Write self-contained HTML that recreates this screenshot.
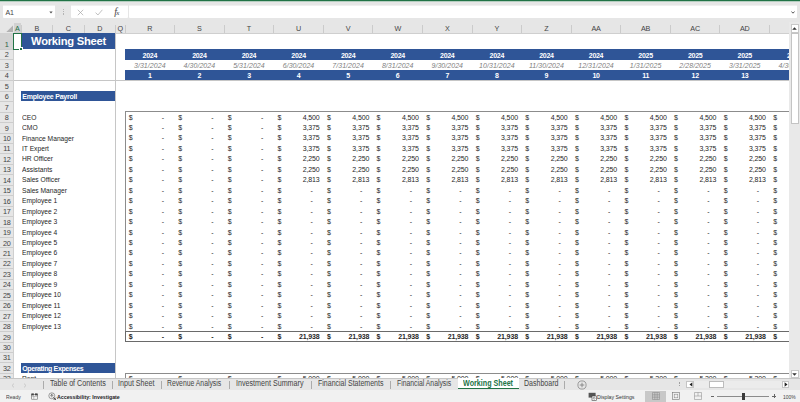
<!DOCTYPE html>
<html><head><meta charset="utf-8"><title>Working Sheet</title>
<style>
*{box-sizing:border-box;margin:0;padding:0}
html,body{width:800px;height:402px;overflow:hidden;background:#e6e6e6}
body{position:relative;font-family:"Liberation Sans",sans-serif;color:#222}
.a{position:absolute;white-space:nowrap}
.t{position:absolute;white-space:nowrap;font-size:7px;line-height:10.45px;color:#262626;letter-spacing:-0.13px}
.lbl{font-size:7.3px;letter-spacing:0;transform:scaleX(0.915);transform-origin:left center}
.b{font-weight:bold}
.w{color:#fff}
.hd{position:absolute;white-space:nowrap;font-size:7.2px;line-height:10px;color:#444;text-align:center;letter-spacing:-0.2px}
.rh{position:absolute;left:0;width:13.5px;text-align:center;font-size:7.3px;line-height:10.45px;color:#444;letter-spacing:-0.3px;white-space:nowrap}
.tab{position:absolute;white-space:nowrap;font-size:8.4px;line-height:10px;color:#444;top:378.1px;transform-origin:left center}
.sep{position:absolute;width:1px;background:#cbcbcb}
.st{position:absolute;white-space:nowrap;font-size:6.1px;line-height:8px;color:#444;transform-origin:left center}
</style></head><body>

<div class="a" style="left:0;top:0;width:800px;height:1px;background:#217346"></div>
<div class="a" style="left:0;top:1px;width:800px;height:1px;background:#b4cdbf"></div>
<div class="a" style="left:3px;top:5px;width:52px;height:13px;background:#fff;border-top:1px solid #f0f0f0;border-radius:1px"></div>
<div class="a" style="left:5.6px;top:8.1px;font-size:7px;line-height:9px;color:#444;letter-spacing:-0.2px">A1</div>
<svg class="a" style="left:49.4px;top:11px" width="4" height="3" viewBox="0 0 4 3"><path d="M0.3 0.4 L3.7 0.4 L2 2.4 Z" fill="#555"/></svg>
<div class="a" style="left:62.7px;top:9.2px;width:1px;height:0.9px;background:#b4b4b4"></div>
<div class="a" style="left:62.7px;top:10.9px;width:1px;height:0.9px;background:#b4b4b4"></div>
<div class="a" style="left:62.7px;top:12.6px;width:1px;height:0.9px;background:#b4b4b4"></div>
<div class="a" style="left:62.7px;top:14.3px;width:1px;height:0.9px;background:#b4b4b4"></div>
<div class="a" style="left:71px;top:5px;width:57px;height:13px;background:#fff;border-top:1px solid #f0f0f0;border-radius:1px"></div>
<svg class="a" style="left:76.5px;top:8.6px" width="7" height="7" viewBox="0 0 7 7"><path d="M0.8 0.8 L6.2 6.2 M6.2 0.8 L0.8 6.2" stroke="#a6a6a6" stroke-width="0.7" fill="none"/></svg>
<svg class="a" style="left:95.4px;top:8.6px" width="8" height="7" viewBox="0 0 8 7"><path d="M0.6 3.6 L2.9 6 L7.4 0.8" stroke="#a6a6a6" stroke-width="0.7" fill="none"/></svg>
<div class="a" style="left:114.2px;top:6.6px;font-family:'Liberation Serif',serif;font-style:italic;font-size:10px;line-height:10px;color:#444;letter-spacing:-0.8px"><span>f</span><span style="font-size:7px">x</span></div>
<div class="a" style="left:129px;top:5px;width:668px;height:13px;background:#fff;border-top:1px solid #f0f0f0;border-radius:1px"></div>
<svg class="a" style="left:790.8px;top:10.8px" width="4" height="3" viewBox="0 0 4 3"><path d="M0.4 0.5 L2 2.2 L3.6 0.5" stroke="#444" stroke-width="0.9" fill="none"/></svg>
<div class="a" style="left:13.6px;top:33.3px;width:775.6px;height:345.2px;background:#fff"></div>
<svg class="a" style="left:5.5px;top:25px" width="7.5" height="7.5" viewBox="0 0 7 7"><path d="M6.8 0.1 L6.8 6.6 L0.3 6.6 Z" fill="#b2b2b2"/></svg>
<div class="a" style="left:13.6px;top:23.4px;width:7.6px;height:9.9px;background:#d2d2d2"></div>
<div class="hd" style="left:13.60px;width:7.60px;top:23.6px;color:#217346">A</div>
<div class="hd" style="left:21.20px;width:31.10px;top:23.6px;color:#444">B</div>
<div class="hd" style="left:52.30px;width:31.70px;top:23.6px;color:#444">C</div>
<div class="hd" style="left:84.00px;width:31.60px;top:23.6px;color:#444">D</div>
<div class="hd" style="left:115.60px;width:9.40px;top:23.6px;color:#444">Q</div>
<div class="hd" style="left:125.00px;width:49.58px;top:23.6px;color:#444">R</div>
<div class="hd" style="left:174.58px;width:49.58px;top:23.6px;color:#444">S</div>
<div class="hd" style="left:224.16px;width:49.58px;top:23.6px;color:#444">T</div>
<div class="hd" style="left:273.74px;width:49.58px;top:23.6px;color:#444">U</div>
<div class="hd" style="left:323.32px;width:49.58px;top:23.6px;color:#444">V</div>
<div class="hd" style="left:372.90px;width:49.58px;top:23.6px;color:#444">W</div>
<div class="hd" style="left:422.48px;width:49.58px;top:23.6px;color:#444">X</div>
<div class="hd" style="left:472.06px;width:49.58px;top:23.6px;color:#444">Y</div>
<div class="hd" style="left:521.64px;width:49.58px;top:23.6px;color:#444">Z</div>
<div class="hd" style="left:571.22px;width:49.58px;top:23.6px;color:#444">AA</div>
<div class="hd" style="left:620.80px;width:49.58px;top:23.6px;color:#444">AB</div>
<div class="hd" style="left:670.38px;width:49.58px;top:23.6px;color:#444">AC</div>
<div class="hd" style="left:719.96px;width:49.58px;top:23.6px;color:#444">AD</div>
<div class="sep" style="left:20.70px;top:24.5px;height:8.8px"></div>
<div class="sep" style="left:51.80px;top:24.5px;height:8.8px"></div>
<div class="sep" style="left:83.50px;top:24.5px;height:8.8px"></div>
<div class="sep" style="left:115.10px;top:24.5px;height:8.8px"></div>
<div class="sep" style="left:124.50px;top:24.5px;height:8.8px"></div>
<div class="sep" style="left:174.08px;top:24.5px;height:8.8px"></div>
<div class="sep" style="left:223.66px;top:24.5px;height:8.8px"></div>
<div class="sep" style="left:273.24px;top:24.5px;height:8.8px"></div>
<div class="sep" style="left:322.82px;top:24.5px;height:8.8px"></div>
<div class="sep" style="left:372.40px;top:24.5px;height:8.8px"></div>
<div class="sep" style="left:421.98px;top:24.5px;height:8.8px"></div>
<div class="sep" style="left:471.56px;top:24.5px;height:8.8px"></div>
<div class="sep" style="left:521.14px;top:24.5px;height:8.8px"></div>
<div class="sep" style="left:570.72px;top:24.5px;height:8.8px"></div>
<div class="sep" style="left:620.30px;top:24.5px;height:8.8px"></div>
<div class="sep" style="left:669.88px;top:24.5px;height:8.8px"></div>
<div class="sep" style="left:719.46px;top:24.5px;height:8.8px"></div>
<div class="sep" style="left:769.04px;top:24.5px;height:8.8px"></div>
<div class="a" style="left:0;top:32.9px;width:789.2px;height:0.6px;background:#cfcfcf"></div>
<div class="a" style="left:0;top:33.3px;width:13.3px;height:16.1px;background:#d2d2d2"></div>
<div class="rh" style="top:39.55px;color:#2f6148">1</div>
<div class="a" style="left:0;top:48.90px;width:13.6px;height:1px;background:#cdcdcd"></div>
<div class="rh" style="top:50.40px">2</div>
<div class="a" style="left:0;top:59.35px;width:13.6px;height:1px;background:#cdcdcd"></div>
<div class="rh" style="top:60.85px">3</div>
<div class="a" style="left:0;top:69.80px;width:13.6px;height:1px;background:#cdcdcd"></div>
<div class="rh" style="top:71.30px">4</div>
<div class="a" style="left:0;top:80.25px;width:13.6px;height:1px;background:#cdcdcd"></div>
<div class="rh" style="top:81.75px">5</div>
<div class="a" style="left:0;top:90.70px;width:13.6px;height:1px;background:#cdcdcd"></div>
<div class="rh" style="top:92.20px">6</div>
<div class="a" style="left:0;top:101.15px;width:13.6px;height:1px;background:#cdcdcd"></div>
<div class="rh" style="top:102.65px">7</div>
<div class="a" style="left:0;top:111.60px;width:13.6px;height:1px;background:#cdcdcd"></div>
<div class="rh" style="top:113.10px">8</div>
<div class="a" style="left:0;top:122.05px;width:13.6px;height:1px;background:#cdcdcd"></div>
<div class="rh" style="top:123.55px">9</div>
<div class="a" style="left:0;top:132.50px;width:13.6px;height:1px;background:#cdcdcd"></div>
<div class="rh" style="top:134.00px">10</div>
<div class="a" style="left:0;top:142.95px;width:13.6px;height:1px;background:#cdcdcd"></div>
<div class="rh" style="top:144.45px">11</div>
<div class="a" style="left:0;top:153.40px;width:13.6px;height:1px;background:#cdcdcd"></div>
<div class="rh" style="top:154.90px">12</div>
<div class="a" style="left:0;top:163.85px;width:13.6px;height:1px;background:#cdcdcd"></div>
<div class="rh" style="top:165.35px">13</div>
<div class="a" style="left:0;top:174.30px;width:13.6px;height:1px;background:#cdcdcd"></div>
<div class="rh" style="top:175.80px">14</div>
<div class="a" style="left:0;top:184.75px;width:13.6px;height:1px;background:#cdcdcd"></div>
<div class="rh" style="top:186.25px">15</div>
<div class="a" style="left:0;top:195.20px;width:13.6px;height:1px;background:#cdcdcd"></div>
<div class="rh" style="top:196.70px">16</div>
<div class="a" style="left:0;top:205.65px;width:13.6px;height:1px;background:#cdcdcd"></div>
<div class="rh" style="top:207.15px">17</div>
<div class="a" style="left:0;top:216.10px;width:13.6px;height:1px;background:#cdcdcd"></div>
<div class="rh" style="top:217.60px">18</div>
<div class="a" style="left:0;top:226.55px;width:13.6px;height:1px;background:#cdcdcd"></div>
<div class="rh" style="top:228.05px">19</div>
<div class="a" style="left:0;top:237.00px;width:13.6px;height:1px;background:#cdcdcd"></div>
<div class="rh" style="top:238.50px">20</div>
<div class="a" style="left:0;top:247.45px;width:13.6px;height:1px;background:#cdcdcd"></div>
<div class="rh" style="top:248.95px">21</div>
<div class="a" style="left:0;top:257.90px;width:13.6px;height:1px;background:#cdcdcd"></div>
<div class="rh" style="top:259.40px">22</div>
<div class="a" style="left:0;top:268.35px;width:13.6px;height:1px;background:#cdcdcd"></div>
<div class="rh" style="top:269.85px">23</div>
<div class="a" style="left:0;top:278.80px;width:13.6px;height:1px;background:#cdcdcd"></div>
<div class="rh" style="top:280.30px">24</div>
<div class="a" style="left:0;top:289.25px;width:13.6px;height:1px;background:#cdcdcd"></div>
<div class="rh" style="top:290.75px">25</div>
<div class="a" style="left:0;top:299.70px;width:13.6px;height:1px;background:#cdcdcd"></div>
<div class="rh" style="top:301.20px">26</div>
<div class="a" style="left:0;top:310.15px;width:13.6px;height:1px;background:#cdcdcd"></div>
<div class="rh" style="top:311.65px">27</div>
<div class="a" style="left:0;top:320.60px;width:13.6px;height:1px;background:#cdcdcd"></div>
<div class="rh" style="top:322.10px">28</div>
<div class="a" style="left:0;top:331.05px;width:13.6px;height:1px;background:#cdcdcd"></div>
<div class="rh" style="top:332.55px">29</div>
<div class="a" style="left:0;top:341.50px;width:13.6px;height:1px;background:#cdcdcd"></div>
<div class="rh" style="top:343.00px">30</div>
<div class="a" style="left:0;top:351.95px;width:13.6px;height:1px;background:#cdcdcd"></div>
<div class="rh" style="top:353.45px">31</div>
<div class="a" style="left:0;top:362.40px;width:13.6px;height:1px;background:#cdcdcd"></div>
<div class="rh" style="top:363.90px">32</div>
<div class="a" style="left:0;top:372.85px;width:13.6px;height:1px;background:#cdcdcd"></div>
<div class="rh" style="top:374.35px">33</div>
<div class="a" style="left:13.1px;top:33.3px;width:0.7px;height:345px;background:#cfcfcf"></div>
<div class="a" style="left:21.4px;top:33.4px;width:94.2px;height:15.4px;background:#2f5597"></div>
<div class="a b w" style="left:21.4px;width:94.2px;text-align:center;top:34.1px;font-size:11.2px;line-height:15px;letter-spacing:-0.25px">Working Sheet</div>
<div class="a" style="left:125px;top:49.40px;width:664.2px;height:10.45px;background:#2f5597"></div>
<div class="a" style="left:125px;top:70.30px;width:664.2px;height:10.45px;background:#2f5597"></div>
<div class="a" style="left:20.6px;top:90.90px;width:95px;height:10.25px;background:#2f5597"></div>
<div class="t b w" style="left:22.2px;top:92.20px;letter-spacing:-0.22px">Employee Payroll</div>
<div class="a" style="left:20.6px;top:362.60px;width:95px;height:10.25px;background:#2f5597"></div>
<div class="t b w" style="left:22.2px;top:363.90px;letter-spacing:-0.36px">Operating Expenses</div>
<div class="a" style="left:115px;top:33.3px;width:1px;height:345px;background:#c6c6c6"></div>
<div class="a" style="left:13.6px;top:80px;width:775.6px;height:1px;background:#c6c6c6"></div>
<div class="a" style="left:125px;top:33.3px;width:664.2px;height:345.2px;overflow:hidden">
<div class="t b w" style="left:0.00px;width:49.58px;text-align:center;top:17.30px;letter-spacing:-0.28px">2024</div>
<div class="t" style="left:0.00px;width:49.58px;text-align:center;top:27.85px;font-style:italic;color:#808080;letter-spacing:0.05px">3/31/2024</div>
<div class="t b w" style="left:0.00px;width:49.58px;text-align:center;top:38.20px;letter-spacing:-0.28px">1</div>
<div class="t b w" style="left:49.58px;width:49.58px;text-align:center;top:17.30px;letter-spacing:-0.28px">2024</div>
<div class="t" style="left:49.58px;width:49.58px;text-align:center;top:27.85px;font-style:italic;color:#808080;letter-spacing:0.05px">4/30/2024</div>
<div class="t b w" style="left:49.58px;width:49.58px;text-align:center;top:38.20px;letter-spacing:-0.28px">2</div>
<div class="t b w" style="left:99.16px;width:49.58px;text-align:center;top:17.30px;letter-spacing:-0.28px">2024</div>
<div class="t" style="left:99.16px;width:49.58px;text-align:center;top:27.85px;font-style:italic;color:#808080;letter-spacing:0.05px">5/31/2024</div>
<div class="t b w" style="left:99.16px;width:49.58px;text-align:center;top:38.20px;letter-spacing:-0.28px">3</div>
<div class="t b w" style="left:148.74px;width:49.58px;text-align:center;top:17.30px;letter-spacing:-0.28px">2024</div>
<div class="t" style="left:148.74px;width:49.58px;text-align:center;top:27.85px;font-style:italic;color:#808080;letter-spacing:0.05px">6/30/2024</div>
<div class="t b w" style="left:148.74px;width:49.58px;text-align:center;top:38.20px;letter-spacing:-0.28px">4</div>
<div class="t b w" style="left:198.32px;width:49.58px;text-align:center;top:17.30px;letter-spacing:-0.28px">2024</div>
<div class="t" style="left:198.32px;width:49.58px;text-align:center;top:27.85px;font-style:italic;color:#808080;letter-spacing:0.05px">7/31/2024</div>
<div class="t b w" style="left:198.32px;width:49.58px;text-align:center;top:38.20px;letter-spacing:-0.28px">5</div>
<div class="t b w" style="left:247.90px;width:49.58px;text-align:center;top:17.30px;letter-spacing:-0.28px">2024</div>
<div class="t" style="left:247.90px;width:49.58px;text-align:center;top:27.85px;font-style:italic;color:#808080;letter-spacing:0.05px">8/31/2024</div>
<div class="t b w" style="left:247.90px;width:49.58px;text-align:center;top:38.20px;letter-spacing:-0.28px">6</div>
<div class="t b w" style="left:297.48px;width:49.58px;text-align:center;top:17.30px;letter-spacing:-0.28px">2024</div>
<div class="t" style="left:297.48px;width:49.58px;text-align:center;top:27.85px;font-style:italic;color:#808080;letter-spacing:0.05px">9/30/2024</div>
<div class="t b w" style="left:297.48px;width:49.58px;text-align:center;top:38.20px;letter-spacing:-0.28px">7</div>
<div class="t b w" style="left:347.06px;width:49.58px;text-align:center;top:17.30px;letter-spacing:-0.28px">2024</div>
<div class="t" style="left:347.06px;width:49.58px;text-align:center;top:27.85px;font-style:italic;color:#808080;letter-spacing:0.05px">10/31/2024</div>
<div class="t b w" style="left:347.06px;width:49.58px;text-align:center;top:38.20px;letter-spacing:-0.28px">8</div>
<div class="t b w" style="left:396.64px;width:49.58px;text-align:center;top:17.30px;letter-spacing:-0.28px">2024</div>
<div class="t" style="left:396.64px;width:49.58px;text-align:center;top:27.85px;font-style:italic;color:#808080;letter-spacing:0.05px">11/30/2024</div>
<div class="t b w" style="left:396.64px;width:49.58px;text-align:center;top:38.20px;letter-spacing:-0.28px">9</div>
<div class="t b w" style="left:446.22px;width:49.58px;text-align:center;top:17.30px;letter-spacing:-0.28px">2024</div>
<div class="t" style="left:446.22px;width:49.58px;text-align:center;top:27.85px;font-style:italic;color:#808080;letter-spacing:0.05px">12/31/2024</div>
<div class="t b w" style="left:446.22px;width:49.58px;text-align:center;top:38.20px;letter-spacing:-0.28px">10</div>
<div class="t b w" style="left:495.80px;width:49.58px;text-align:center;top:17.30px;letter-spacing:-0.28px">2025</div>
<div class="t" style="left:495.80px;width:49.58px;text-align:center;top:27.85px;font-style:italic;color:#808080;letter-spacing:0.05px">1/31/2025</div>
<div class="t b w" style="left:495.80px;width:49.58px;text-align:center;top:38.20px;letter-spacing:-0.28px">11</div>
<div class="t b w" style="left:545.38px;width:49.58px;text-align:center;top:17.30px;letter-spacing:-0.28px">2025</div>
<div class="t" style="left:545.38px;width:49.58px;text-align:center;top:27.85px;font-style:italic;color:#808080;letter-spacing:0.05px">2/28/2025</div>
<div class="t b w" style="left:545.38px;width:49.58px;text-align:center;top:38.20px;letter-spacing:-0.28px">12</div>
<div class="t b w" style="left:594.96px;width:49.58px;text-align:center;top:17.30px;letter-spacing:-0.28px">2025</div>
<div class="t" style="left:594.96px;width:49.58px;text-align:center;top:27.85px;font-style:italic;color:#808080;letter-spacing:0.05px">3/31/2025</div>
<div class="t b w" style="left:594.96px;width:49.58px;text-align:center;top:38.20px;letter-spacing:-0.28px">13</div>
<div class="t b w" style="left:644.54px;width:49.58px;text-align:center;top:17.30px;letter-spacing:-0.28px">2025</div>
<div class="t" style="left:644.54px;width:49.58px;text-align:center;top:27.85px;font-style:italic;color:#808080;letter-spacing:0.05px">4/30/2025</div>
<div class="t b w" style="left:644.54px;width:49.58px;text-align:center;top:38.20px;letter-spacing:-0.28px">14</div>
<div class="a" style="left:0;top:78.20px;width:700px;height:219.45px;border-left:1.3px solid #8c8c8c;border-top:1.3px solid #8c8c8c"></div>
<div class="a" style="left:0;top:297.75px;width:700px;height:10.95px;border-left:1px solid #6a6a6a;border-top:1px solid #6a6a6a;border-bottom:1px solid #6a6a6a"></div>
<div class="a" style="left:0;top:339.55px;width:700px;height:10.95px;border-left:1.3px solid #8c8c8c;border-top:1.3px solid #8c8c8c"></div>
<div class="t" style="left:3.70px;top:79.30px">$</div>
<div class="t" style="left:0.00px;width:38.98px;text-align:right;top:79.30px">-</div>
<div class="t" style="left:53.28px;top:79.30px">$</div>
<div class="t" style="left:49.58px;width:38.98px;text-align:right;top:79.30px">-</div>
<div class="t" style="left:102.86px;top:79.30px">$</div>
<div class="t" style="left:99.16px;width:38.98px;text-align:right;top:79.30px">-</div>
<div class="t" style="left:152.44px;top:79.30px">$</div>
<div class="t" style="left:148.74px;width:45.88px;text-align:right;top:79.30px">4,500</div>
<div class="t" style="left:202.02px;top:79.30px">$</div>
<div class="t" style="left:198.32px;width:45.88px;text-align:right;top:79.30px">4,500</div>
<div class="t" style="left:251.60px;top:79.30px">$</div>
<div class="t" style="left:247.90px;width:45.88px;text-align:right;top:79.30px">4,500</div>
<div class="t" style="left:301.18px;top:79.30px">$</div>
<div class="t" style="left:297.48px;width:45.88px;text-align:right;top:79.30px">4,500</div>
<div class="t" style="left:350.76px;top:79.30px">$</div>
<div class="t" style="left:347.06px;width:45.88px;text-align:right;top:79.30px">4,500</div>
<div class="t" style="left:400.34px;top:79.30px">$</div>
<div class="t" style="left:396.64px;width:45.88px;text-align:right;top:79.30px">4,500</div>
<div class="t" style="left:449.92px;top:79.30px">$</div>
<div class="t" style="left:446.22px;width:45.88px;text-align:right;top:79.30px">4,500</div>
<div class="t" style="left:499.50px;top:79.30px">$</div>
<div class="t" style="left:495.80px;width:45.88px;text-align:right;top:79.30px">4,500</div>
<div class="t" style="left:549.08px;top:79.30px">$</div>
<div class="t" style="left:545.38px;width:45.88px;text-align:right;top:79.30px">4,500</div>
<div class="t" style="left:598.66px;top:79.30px">$</div>
<div class="t" style="left:594.96px;width:45.88px;text-align:right;top:79.30px">4,500</div>
<div class="t" style="left:648.24px;top:79.30px">$</div>
<div class="t" style="left:644.54px;width:45.88px;text-align:right;top:79.30px">4,500</div>
<div class="t" style="left:3.70px;top:89.75px">$</div>
<div class="t" style="left:0.00px;width:38.98px;text-align:right;top:89.75px">-</div>
<div class="t" style="left:53.28px;top:89.75px">$</div>
<div class="t" style="left:49.58px;width:38.98px;text-align:right;top:89.75px">-</div>
<div class="t" style="left:102.86px;top:89.75px">$</div>
<div class="t" style="left:99.16px;width:38.98px;text-align:right;top:89.75px">-</div>
<div class="t" style="left:152.44px;top:89.75px">$</div>
<div class="t" style="left:148.74px;width:45.88px;text-align:right;top:89.75px">3,375</div>
<div class="t" style="left:202.02px;top:89.75px">$</div>
<div class="t" style="left:198.32px;width:45.88px;text-align:right;top:89.75px">3,375</div>
<div class="t" style="left:251.60px;top:89.75px">$</div>
<div class="t" style="left:247.90px;width:45.88px;text-align:right;top:89.75px">3,375</div>
<div class="t" style="left:301.18px;top:89.75px">$</div>
<div class="t" style="left:297.48px;width:45.88px;text-align:right;top:89.75px">3,375</div>
<div class="t" style="left:350.76px;top:89.75px">$</div>
<div class="t" style="left:347.06px;width:45.88px;text-align:right;top:89.75px">3,375</div>
<div class="t" style="left:400.34px;top:89.75px">$</div>
<div class="t" style="left:396.64px;width:45.88px;text-align:right;top:89.75px">3,375</div>
<div class="t" style="left:449.92px;top:89.75px">$</div>
<div class="t" style="left:446.22px;width:45.88px;text-align:right;top:89.75px">3,375</div>
<div class="t" style="left:499.50px;top:89.75px">$</div>
<div class="t" style="left:495.80px;width:45.88px;text-align:right;top:89.75px">3,375</div>
<div class="t" style="left:549.08px;top:89.75px">$</div>
<div class="t" style="left:545.38px;width:45.88px;text-align:right;top:89.75px">3,375</div>
<div class="t" style="left:598.66px;top:89.75px">$</div>
<div class="t" style="left:594.96px;width:45.88px;text-align:right;top:89.75px">3,375</div>
<div class="t" style="left:648.24px;top:89.75px">$</div>
<div class="t" style="left:644.54px;width:45.88px;text-align:right;top:89.75px">3,375</div>
<div class="t" style="left:3.70px;top:100.20px">$</div>
<div class="t" style="left:0.00px;width:38.98px;text-align:right;top:100.20px">-</div>
<div class="t" style="left:53.28px;top:100.20px">$</div>
<div class="t" style="left:49.58px;width:38.98px;text-align:right;top:100.20px">-</div>
<div class="t" style="left:102.86px;top:100.20px">$</div>
<div class="t" style="left:99.16px;width:38.98px;text-align:right;top:100.20px">-</div>
<div class="t" style="left:152.44px;top:100.20px">$</div>
<div class="t" style="left:148.74px;width:45.88px;text-align:right;top:100.20px">3,375</div>
<div class="t" style="left:202.02px;top:100.20px">$</div>
<div class="t" style="left:198.32px;width:45.88px;text-align:right;top:100.20px">3,375</div>
<div class="t" style="left:251.60px;top:100.20px">$</div>
<div class="t" style="left:247.90px;width:45.88px;text-align:right;top:100.20px">3,375</div>
<div class="t" style="left:301.18px;top:100.20px">$</div>
<div class="t" style="left:297.48px;width:45.88px;text-align:right;top:100.20px">3,375</div>
<div class="t" style="left:350.76px;top:100.20px">$</div>
<div class="t" style="left:347.06px;width:45.88px;text-align:right;top:100.20px">3,375</div>
<div class="t" style="left:400.34px;top:100.20px">$</div>
<div class="t" style="left:396.64px;width:45.88px;text-align:right;top:100.20px">3,375</div>
<div class="t" style="left:449.92px;top:100.20px">$</div>
<div class="t" style="left:446.22px;width:45.88px;text-align:right;top:100.20px">3,375</div>
<div class="t" style="left:499.50px;top:100.20px">$</div>
<div class="t" style="left:495.80px;width:45.88px;text-align:right;top:100.20px">3,375</div>
<div class="t" style="left:549.08px;top:100.20px">$</div>
<div class="t" style="left:545.38px;width:45.88px;text-align:right;top:100.20px">3,375</div>
<div class="t" style="left:598.66px;top:100.20px">$</div>
<div class="t" style="left:594.96px;width:45.88px;text-align:right;top:100.20px">3,375</div>
<div class="t" style="left:648.24px;top:100.20px">$</div>
<div class="t" style="left:644.54px;width:45.88px;text-align:right;top:100.20px">3,375</div>
<div class="t" style="left:3.70px;top:110.65px">$</div>
<div class="t" style="left:0.00px;width:38.98px;text-align:right;top:110.65px">-</div>
<div class="t" style="left:53.28px;top:110.65px">$</div>
<div class="t" style="left:49.58px;width:38.98px;text-align:right;top:110.65px">-</div>
<div class="t" style="left:102.86px;top:110.65px">$</div>
<div class="t" style="left:99.16px;width:38.98px;text-align:right;top:110.65px">-</div>
<div class="t" style="left:152.44px;top:110.65px">$</div>
<div class="t" style="left:148.74px;width:45.88px;text-align:right;top:110.65px">3,375</div>
<div class="t" style="left:202.02px;top:110.65px">$</div>
<div class="t" style="left:198.32px;width:45.88px;text-align:right;top:110.65px">3,375</div>
<div class="t" style="left:251.60px;top:110.65px">$</div>
<div class="t" style="left:247.90px;width:45.88px;text-align:right;top:110.65px">3,375</div>
<div class="t" style="left:301.18px;top:110.65px">$</div>
<div class="t" style="left:297.48px;width:45.88px;text-align:right;top:110.65px">3,375</div>
<div class="t" style="left:350.76px;top:110.65px">$</div>
<div class="t" style="left:347.06px;width:45.88px;text-align:right;top:110.65px">3,375</div>
<div class="t" style="left:400.34px;top:110.65px">$</div>
<div class="t" style="left:396.64px;width:45.88px;text-align:right;top:110.65px">3,375</div>
<div class="t" style="left:449.92px;top:110.65px">$</div>
<div class="t" style="left:446.22px;width:45.88px;text-align:right;top:110.65px">3,375</div>
<div class="t" style="left:499.50px;top:110.65px">$</div>
<div class="t" style="left:495.80px;width:45.88px;text-align:right;top:110.65px">3,375</div>
<div class="t" style="left:549.08px;top:110.65px">$</div>
<div class="t" style="left:545.38px;width:45.88px;text-align:right;top:110.65px">3,375</div>
<div class="t" style="left:598.66px;top:110.65px">$</div>
<div class="t" style="left:594.96px;width:45.88px;text-align:right;top:110.65px">3,375</div>
<div class="t" style="left:648.24px;top:110.65px">$</div>
<div class="t" style="left:644.54px;width:45.88px;text-align:right;top:110.65px">3,375</div>
<div class="t" style="left:3.70px;top:121.10px">$</div>
<div class="t" style="left:0.00px;width:38.98px;text-align:right;top:121.10px">-</div>
<div class="t" style="left:53.28px;top:121.10px">$</div>
<div class="t" style="left:49.58px;width:38.98px;text-align:right;top:121.10px">-</div>
<div class="t" style="left:102.86px;top:121.10px">$</div>
<div class="t" style="left:99.16px;width:38.98px;text-align:right;top:121.10px">-</div>
<div class="t" style="left:152.44px;top:121.10px">$</div>
<div class="t" style="left:148.74px;width:45.88px;text-align:right;top:121.10px">2,250</div>
<div class="t" style="left:202.02px;top:121.10px">$</div>
<div class="t" style="left:198.32px;width:45.88px;text-align:right;top:121.10px">2,250</div>
<div class="t" style="left:251.60px;top:121.10px">$</div>
<div class="t" style="left:247.90px;width:45.88px;text-align:right;top:121.10px">2,250</div>
<div class="t" style="left:301.18px;top:121.10px">$</div>
<div class="t" style="left:297.48px;width:45.88px;text-align:right;top:121.10px">2,250</div>
<div class="t" style="left:350.76px;top:121.10px">$</div>
<div class="t" style="left:347.06px;width:45.88px;text-align:right;top:121.10px">2,250</div>
<div class="t" style="left:400.34px;top:121.10px">$</div>
<div class="t" style="left:396.64px;width:45.88px;text-align:right;top:121.10px">2,250</div>
<div class="t" style="left:449.92px;top:121.10px">$</div>
<div class="t" style="left:446.22px;width:45.88px;text-align:right;top:121.10px">2,250</div>
<div class="t" style="left:499.50px;top:121.10px">$</div>
<div class="t" style="left:495.80px;width:45.88px;text-align:right;top:121.10px">2,250</div>
<div class="t" style="left:549.08px;top:121.10px">$</div>
<div class="t" style="left:545.38px;width:45.88px;text-align:right;top:121.10px">2,250</div>
<div class="t" style="left:598.66px;top:121.10px">$</div>
<div class="t" style="left:594.96px;width:45.88px;text-align:right;top:121.10px">2,250</div>
<div class="t" style="left:648.24px;top:121.10px">$</div>
<div class="t" style="left:644.54px;width:45.88px;text-align:right;top:121.10px">2,250</div>
<div class="t" style="left:3.70px;top:131.55px">$</div>
<div class="t" style="left:0.00px;width:38.98px;text-align:right;top:131.55px">-</div>
<div class="t" style="left:53.28px;top:131.55px">$</div>
<div class="t" style="left:49.58px;width:38.98px;text-align:right;top:131.55px">-</div>
<div class="t" style="left:102.86px;top:131.55px">$</div>
<div class="t" style="left:99.16px;width:38.98px;text-align:right;top:131.55px">-</div>
<div class="t" style="left:152.44px;top:131.55px">$</div>
<div class="t" style="left:148.74px;width:45.88px;text-align:right;top:131.55px">2,250</div>
<div class="t" style="left:202.02px;top:131.55px">$</div>
<div class="t" style="left:198.32px;width:45.88px;text-align:right;top:131.55px">2,250</div>
<div class="t" style="left:251.60px;top:131.55px">$</div>
<div class="t" style="left:247.90px;width:45.88px;text-align:right;top:131.55px">2,250</div>
<div class="t" style="left:301.18px;top:131.55px">$</div>
<div class="t" style="left:297.48px;width:45.88px;text-align:right;top:131.55px">2,250</div>
<div class="t" style="left:350.76px;top:131.55px">$</div>
<div class="t" style="left:347.06px;width:45.88px;text-align:right;top:131.55px">2,250</div>
<div class="t" style="left:400.34px;top:131.55px">$</div>
<div class="t" style="left:396.64px;width:45.88px;text-align:right;top:131.55px">2,250</div>
<div class="t" style="left:449.92px;top:131.55px">$</div>
<div class="t" style="left:446.22px;width:45.88px;text-align:right;top:131.55px">2,250</div>
<div class="t" style="left:499.50px;top:131.55px">$</div>
<div class="t" style="left:495.80px;width:45.88px;text-align:right;top:131.55px">2,250</div>
<div class="t" style="left:549.08px;top:131.55px">$</div>
<div class="t" style="left:545.38px;width:45.88px;text-align:right;top:131.55px">2,250</div>
<div class="t" style="left:598.66px;top:131.55px">$</div>
<div class="t" style="left:594.96px;width:45.88px;text-align:right;top:131.55px">2,250</div>
<div class="t" style="left:648.24px;top:131.55px">$</div>
<div class="t" style="left:644.54px;width:45.88px;text-align:right;top:131.55px">2,250</div>
<div class="t" style="left:3.70px;top:142.00px">$</div>
<div class="t" style="left:0.00px;width:38.98px;text-align:right;top:142.00px">-</div>
<div class="t" style="left:53.28px;top:142.00px">$</div>
<div class="t" style="left:49.58px;width:38.98px;text-align:right;top:142.00px">-</div>
<div class="t" style="left:102.86px;top:142.00px">$</div>
<div class="t" style="left:99.16px;width:38.98px;text-align:right;top:142.00px">-</div>
<div class="t" style="left:152.44px;top:142.00px">$</div>
<div class="t" style="left:148.74px;width:45.88px;text-align:right;top:142.00px">2,813</div>
<div class="t" style="left:202.02px;top:142.00px">$</div>
<div class="t" style="left:198.32px;width:45.88px;text-align:right;top:142.00px">2,813</div>
<div class="t" style="left:251.60px;top:142.00px">$</div>
<div class="t" style="left:247.90px;width:45.88px;text-align:right;top:142.00px">2,813</div>
<div class="t" style="left:301.18px;top:142.00px">$</div>
<div class="t" style="left:297.48px;width:45.88px;text-align:right;top:142.00px">2,813</div>
<div class="t" style="left:350.76px;top:142.00px">$</div>
<div class="t" style="left:347.06px;width:45.88px;text-align:right;top:142.00px">2,813</div>
<div class="t" style="left:400.34px;top:142.00px">$</div>
<div class="t" style="left:396.64px;width:45.88px;text-align:right;top:142.00px">2,813</div>
<div class="t" style="left:449.92px;top:142.00px">$</div>
<div class="t" style="left:446.22px;width:45.88px;text-align:right;top:142.00px">2,813</div>
<div class="t" style="left:499.50px;top:142.00px">$</div>
<div class="t" style="left:495.80px;width:45.88px;text-align:right;top:142.00px">2,813</div>
<div class="t" style="left:549.08px;top:142.00px">$</div>
<div class="t" style="left:545.38px;width:45.88px;text-align:right;top:142.00px">2,813</div>
<div class="t" style="left:598.66px;top:142.00px">$</div>
<div class="t" style="left:594.96px;width:45.88px;text-align:right;top:142.00px">2,813</div>
<div class="t" style="left:648.24px;top:142.00px">$</div>
<div class="t" style="left:644.54px;width:45.88px;text-align:right;top:142.00px">2,813</div>
<div class="t" style="left:3.70px;top:152.45px">$</div>
<div class="t" style="left:0.00px;width:38.98px;text-align:right;top:152.45px">-</div>
<div class="t" style="left:53.28px;top:152.45px">$</div>
<div class="t" style="left:49.58px;width:38.98px;text-align:right;top:152.45px">-</div>
<div class="t" style="left:102.86px;top:152.45px">$</div>
<div class="t" style="left:99.16px;width:38.98px;text-align:right;top:152.45px">-</div>
<div class="t" style="left:152.44px;top:152.45px">$</div>
<div class="t" style="left:148.74px;width:38.98px;text-align:right;top:152.45px">-</div>
<div class="t" style="left:202.02px;top:152.45px">$</div>
<div class="t" style="left:198.32px;width:38.98px;text-align:right;top:152.45px">-</div>
<div class="t" style="left:251.60px;top:152.45px">$</div>
<div class="t" style="left:247.90px;width:38.98px;text-align:right;top:152.45px">-</div>
<div class="t" style="left:301.18px;top:152.45px">$</div>
<div class="t" style="left:297.48px;width:38.98px;text-align:right;top:152.45px">-</div>
<div class="t" style="left:350.76px;top:152.45px">$</div>
<div class="t" style="left:347.06px;width:38.98px;text-align:right;top:152.45px">-</div>
<div class="t" style="left:400.34px;top:152.45px">$</div>
<div class="t" style="left:396.64px;width:38.98px;text-align:right;top:152.45px">-</div>
<div class="t" style="left:449.92px;top:152.45px">$</div>
<div class="t" style="left:446.22px;width:38.98px;text-align:right;top:152.45px">-</div>
<div class="t" style="left:499.50px;top:152.45px">$</div>
<div class="t" style="left:495.80px;width:38.98px;text-align:right;top:152.45px">-</div>
<div class="t" style="left:549.08px;top:152.45px">$</div>
<div class="t" style="left:545.38px;width:38.98px;text-align:right;top:152.45px">-</div>
<div class="t" style="left:598.66px;top:152.45px">$</div>
<div class="t" style="left:594.96px;width:38.98px;text-align:right;top:152.45px">-</div>
<div class="t" style="left:648.24px;top:152.45px">$</div>
<div class="t" style="left:644.54px;width:38.98px;text-align:right;top:152.45px">-</div>
<div class="t" style="left:3.70px;top:162.90px">$</div>
<div class="t" style="left:0.00px;width:38.98px;text-align:right;top:162.90px">-</div>
<div class="t" style="left:53.28px;top:162.90px">$</div>
<div class="t" style="left:49.58px;width:38.98px;text-align:right;top:162.90px">-</div>
<div class="t" style="left:102.86px;top:162.90px">$</div>
<div class="t" style="left:99.16px;width:38.98px;text-align:right;top:162.90px">-</div>
<div class="t" style="left:152.44px;top:162.90px">$</div>
<div class="t" style="left:148.74px;width:38.98px;text-align:right;top:162.90px">-</div>
<div class="t" style="left:202.02px;top:162.90px">$</div>
<div class="t" style="left:198.32px;width:38.98px;text-align:right;top:162.90px">-</div>
<div class="t" style="left:251.60px;top:162.90px">$</div>
<div class="t" style="left:247.90px;width:38.98px;text-align:right;top:162.90px">-</div>
<div class="t" style="left:301.18px;top:162.90px">$</div>
<div class="t" style="left:297.48px;width:38.98px;text-align:right;top:162.90px">-</div>
<div class="t" style="left:350.76px;top:162.90px">$</div>
<div class="t" style="left:347.06px;width:38.98px;text-align:right;top:162.90px">-</div>
<div class="t" style="left:400.34px;top:162.90px">$</div>
<div class="t" style="left:396.64px;width:38.98px;text-align:right;top:162.90px">-</div>
<div class="t" style="left:449.92px;top:162.90px">$</div>
<div class="t" style="left:446.22px;width:38.98px;text-align:right;top:162.90px">-</div>
<div class="t" style="left:499.50px;top:162.90px">$</div>
<div class="t" style="left:495.80px;width:38.98px;text-align:right;top:162.90px">-</div>
<div class="t" style="left:549.08px;top:162.90px">$</div>
<div class="t" style="left:545.38px;width:38.98px;text-align:right;top:162.90px">-</div>
<div class="t" style="left:598.66px;top:162.90px">$</div>
<div class="t" style="left:594.96px;width:38.98px;text-align:right;top:162.90px">-</div>
<div class="t" style="left:648.24px;top:162.90px">$</div>
<div class="t" style="left:644.54px;width:38.98px;text-align:right;top:162.90px">-</div>
<div class="t" style="left:3.70px;top:173.35px">$</div>
<div class="t" style="left:0.00px;width:38.98px;text-align:right;top:173.35px">-</div>
<div class="t" style="left:53.28px;top:173.35px">$</div>
<div class="t" style="left:49.58px;width:38.98px;text-align:right;top:173.35px">-</div>
<div class="t" style="left:102.86px;top:173.35px">$</div>
<div class="t" style="left:99.16px;width:38.98px;text-align:right;top:173.35px">-</div>
<div class="t" style="left:152.44px;top:173.35px">$</div>
<div class="t" style="left:148.74px;width:38.98px;text-align:right;top:173.35px">-</div>
<div class="t" style="left:202.02px;top:173.35px">$</div>
<div class="t" style="left:198.32px;width:38.98px;text-align:right;top:173.35px">-</div>
<div class="t" style="left:251.60px;top:173.35px">$</div>
<div class="t" style="left:247.90px;width:38.98px;text-align:right;top:173.35px">-</div>
<div class="t" style="left:301.18px;top:173.35px">$</div>
<div class="t" style="left:297.48px;width:38.98px;text-align:right;top:173.35px">-</div>
<div class="t" style="left:350.76px;top:173.35px">$</div>
<div class="t" style="left:347.06px;width:38.98px;text-align:right;top:173.35px">-</div>
<div class="t" style="left:400.34px;top:173.35px">$</div>
<div class="t" style="left:396.64px;width:38.98px;text-align:right;top:173.35px">-</div>
<div class="t" style="left:449.92px;top:173.35px">$</div>
<div class="t" style="left:446.22px;width:38.98px;text-align:right;top:173.35px">-</div>
<div class="t" style="left:499.50px;top:173.35px">$</div>
<div class="t" style="left:495.80px;width:38.98px;text-align:right;top:173.35px">-</div>
<div class="t" style="left:549.08px;top:173.35px">$</div>
<div class="t" style="left:545.38px;width:38.98px;text-align:right;top:173.35px">-</div>
<div class="t" style="left:598.66px;top:173.35px">$</div>
<div class="t" style="left:594.96px;width:38.98px;text-align:right;top:173.35px">-</div>
<div class="t" style="left:648.24px;top:173.35px">$</div>
<div class="t" style="left:644.54px;width:38.98px;text-align:right;top:173.35px">-</div>
<div class="t" style="left:3.70px;top:183.80px">$</div>
<div class="t" style="left:0.00px;width:38.98px;text-align:right;top:183.80px">-</div>
<div class="t" style="left:53.28px;top:183.80px">$</div>
<div class="t" style="left:49.58px;width:38.98px;text-align:right;top:183.80px">-</div>
<div class="t" style="left:102.86px;top:183.80px">$</div>
<div class="t" style="left:99.16px;width:38.98px;text-align:right;top:183.80px">-</div>
<div class="t" style="left:152.44px;top:183.80px">$</div>
<div class="t" style="left:148.74px;width:38.98px;text-align:right;top:183.80px">-</div>
<div class="t" style="left:202.02px;top:183.80px">$</div>
<div class="t" style="left:198.32px;width:38.98px;text-align:right;top:183.80px">-</div>
<div class="t" style="left:251.60px;top:183.80px">$</div>
<div class="t" style="left:247.90px;width:38.98px;text-align:right;top:183.80px">-</div>
<div class="t" style="left:301.18px;top:183.80px">$</div>
<div class="t" style="left:297.48px;width:38.98px;text-align:right;top:183.80px">-</div>
<div class="t" style="left:350.76px;top:183.80px">$</div>
<div class="t" style="left:347.06px;width:38.98px;text-align:right;top:183.80px">-</div>
<div class="t" style="left:400.34px;top:183.80px">$</div>
<div class="t" style="left:396.64px;width:38.98px;text-align:right;top:183.80px">-</div>
<div class="t" style="left:449.92px;top:183.80px">$</div>
<div class="t" style="left:446.22px;width:38.98px;text-align:right;top:183.80px">-</div>
<div class="t" style="left:499.50px;top:183.80px">$</div>
<div class="t" style="left:495.80px;width:38.98px;text-align:right;top:183.80px">-</div>
<div class="t" style="left:549.08px;top:183.80px">$</div>
<div class="t" style="left:545.38px;width:38.98px;text-align:right;top:183.80px">-</div>
<div class="t" style="left:598.66px;top:183.80px">$</div>
<div class="t" style="left:594.96px;width:38.98px;text-align:right;top:183.80px">-</div>
<div class="t" style="left:648.24px;top:183.80px">$</div>
<div class="t" style="left:644.54px;width:38.98px;text-align:right;top:183.80px">-</div>
<div class="t" style="left:3.70px;top:194.25px">$</div>
<div class="t" style="left:0.00px;width:38.98px;text-align:right;top:194.25px">-</div>
<div class="t" style="left:53.28px;top:194.25px">$</div>
<div class="t" style="left:49.58px;width:38.98px;text-align:right;top:194.25px">-</div>
<div class="t" style="left:102.86px;top:194.25px">$</div>
<div class="t" style="left:99.16px;width:38.98px;text-align:right;top:194.25px">-</div>
<div class="t" style="left:152.44px;top:194.25px">$</div>
<div class="t" style="left:148.74px;width:38.98px;text-align:right;top:194.25px">-</div>
<div class="t" style="left:202.02px;top:194.25px">$</div>
<div class="t" style="left:198.32px;width:38.98px;text-align:right;top:194.25px">-</div>
<div class="t" style="left:251.60px;top:194.25px">$</div>
<div class="t" style="left:247.90px;width:38.98px;text-align:right;top:194.25px">-</div>
<div class="t" style="left:301.18px;top:194.25px">$</div>
<div class="t" style="left:297.48px;width:38.98px;text-align:right;top:194.25px">-</div>
<div class="t" style="left:350.76px;top:194.25px">$</div>
<div class="t" style="left:347.06px;width:38.98px;text-align:right;top:194.25px">-</div>
<div class="t" style="left:400.34px;top:194.25px">$</div>
<div class="t" style="left:396.64px;width:38.98px;text-align:right;top:194.25px">-</div>
<div class="t" style="left:449.92px;top:194.25px">$</div>
<div class="t" style="left:446.22px;width:38.98px;text-align:right;top:194.25px">-</div>
<div class="t" style="left:499.50px;top:194.25px">$</div>
<div class="t" style="left:495.80px;width:38.98px;text-align:right;top:194.25px">-</div>
<div class="t" style="left:549.08px;top:194.25px">$</div>
<div class="t" style="left:545.38px;width:38.98px;text-align:right;top:194.25px">-</div>
<div class="t" style="left:598.66px;top:194.25px">$</div>
<div class="t" style="left:594.96px;width:38.98px;text-align:right;top:194.25px">-</div>
<div class="t" style="left:648.24px;top:194.25px">$</div>
<div class="t" style="left:644.54px;width:38.98px;text-align:right;top:194.25px">-</div>
<div class="t" style="left:3.70px;top:204.70px">$</div>
<div class="t" style="left:0.00px;width:38.98px;text-align:right;top:204.70px">-</div>
<div class="t" style="left:53.28px;top:204.70px">$</div>
<div class="t" style="left:49.58px;width:38.98px;text-align:right;top:204.70px">-</div>
<div class="t" style="left:102.86px;top:204.70px">$</div>
<div class="t" style="left:99.16px;width:38.98px;text-align:right;top:204.70px">-</div>
<div class="t" style="left:152.44px;top:204.70px">$</div>
<div class="t" style="left:148.74px;width:38.98px;text-align:right;top:204.70px">-</div>
<div class="t" style="left:202.02px;top:204.70px">$</div>
<div class="t" style="left:198.32px;width:38.98px;text-align:right;top:204.70px">-</div>
<div class="t" style="left:251.60px;top:204.70px">$</div>
<div class="t" style="left:247.90px;width:38.98px;text-align:right;top:204.70px">-</div>
<div class="t" style="left:301.18px;top:204.70px">$</div>
<div class="t" style="left:297.48px;width:38.98px;text-align:right;top:204.70px">-</div>
<div class="t" style="left:350.76px;top:204.70px">$</div>
<div class="t" style="left:347.06px;width:38.98px;text-align:right;top:204.70px">-</div>
<div class="t" style="left:400.34px;top:204.70px">$</div>
<div class="t" style="left:396.64px;width:38.98px;text-align:right;top:204.70px">-</div>
<div class="t" style="left:449.92px;top:204.70px">$</div>
<div class="t" style="left:446.22px;width:38.98px;text-align:right;top:204.70px">-</div>
<div class="t" style="left:499.50px;top:204.70px">$</div>
<div class="t" style="left:495.80px;width:38.98px;text-align:right;top:204.70px">-</div>
<div class="t" style="left:549.08px;top:204.70px">$</div>
<div class="t" style="left:545.38px;width:38.98px;text-align:right;top:204.70px">-</div>
<div class="t" style="left:598.66px;top:204.70px">$</div>
<div class="t" style="left:594.96px;width:38.98px;text-align:right;top:204.70px">-</div>
<div class="t" style="left:648.24px;top:204.70px">$</div>
<div class="t" style="left:644.54px;width:38.98px;text-align:right;top:204.70px">-</div>
<div class="t" style="left:3.70px;top:215.15px">$</div>
<div class="t" style="left:0.00px;width:38.98px;text-align:right;top:215.15px">-</div>
<div class="t" style="left:53.28px;top:215.15px">$</div>
<div class="t" style="left:49.58px;width:38.98px;text-align:right;top:215.15px">-</div>
<div class="t" style="left:102.86px;top:215.15px">$</div>
<div class="t" style="left:99.16px;width:38.98px;text-align:right;top:215.15px">-</div>
<div class="t" style="left:152.44px;top:215.15px">$</div>
<div class="t" style="left:148.74px;width:38.98px;text-align:right;top:215.15px">-</div>
<div class="t" style="left:202.02px;top:215.15px">$</div>
<div class="t" style="left:198.32px;width:38.98px;text-align:right;top:215.15px">-</div>
<div class="t" style="left:251.60px;top:215.15px">$</div>
<div class="t" style="left:247.90px;width:38.98px;text-align:right;top:215.15px">-</div>
<div class="t" style="left:301.18px;top:215.15px">$</div>
<div class="t" style="left:297.48px;width:38.98px;text-align:right;top:215.15px">-</div>
<div class="t" style="left:350.76px;top:215.15px">$</div>
<div class="t" style="left:347.06px;width:38.98px;text-align:right;top:215.15px">-</div>
<div class="t" style="left:400.34px;top:215.15px">$</div>
<div class="t" style="left:396.64px;width:38.98px;text-align:right;top:215.15px">-</div>
<div class="t" style="left:449.92px;top:215.15px">$</div>
<div class="t" style="left:446.22px;width:38.98px;text-align:right;top:215.15px">-</div>
<div class="t" style="left:499.50px;top:215.15px">$</div>
<div class="t" style="left:495.80px;width:38.98px;text-align:right;top:215.15px">-</div>
<div class="t" style="left:549.08px;top:215.15px">$</div>
<div class="t" style="left:545.38px;width:38.98px;text-align:right;top:215.15px">-</div>
<div class="t" style="left:598.66px;top:215.15px">$</div>
<div class="t" style="left:594.96px;width:38.98px;text-align:right;top:215.15px">-</div>
<div class="t" style="left:648.24px;top:215.15px">$</div>
<div class="t" style="left:644.54px;width:38.98px;text-align:right;top:215.15px">-</div>
<div class="t" style="left:3.70px;top:225.60px">$</div>
<div class="t" style="left:0.00px;width:38.98px;text-align:right;top:225.60px">-</div>
<div class="t" style="left:53.28px;top:225.60px">$</div>
<div class="t" style="left:49.58px;width:38.98px;text-align:right;top:225.60px">-</div>
<div class="t" style="left:102.86px;top:225.60px">$</div>
<div class="t" style="left:99.16px;width:38.98px;text-align:right;top:225.60px">-</div>
<div class="t" style="left:152.44px;top:225.60px">$</div>
<div class="t" style="left:148.74px;width:38.98px;text-align:right;top:225.60px">-</div>
<div class="t" style="left:202.02px;top:225.60px">$</div>
<div class="t" style="left:198.32px;width:38.98px;text-align:right;top:225.60px">-</div>
<div class="t" style="left:251.60px;top:225.60px">$</div>
<div class="t" style="left:247.90px;width:38.98px;text-align:right;top:225.60px">-</div>
<div class="t" style="left:301.18px;top:225.60px">$</div>
<div class="t" style="left:297.48px;width:38.98px;text-align:right;top:225.60px">-</div>
<div class="t" style="left:350.76px;top:225.60px">$</div>
<div class="t" style="left:347.06px;width:38.98px;text-align:right;top:225.60px">-</div>
<div class="t" style="left:400.34px;top:225.60px">$</div>
<div class="t" style="left:396.64px;width:38.98px;text-align:right;top:225.60px">-</div>
<div class="t" style="left:449.92px;top:225.60px">$</div>
<div class="t" style="left:446.22px;width:38.98px;text-align:right;top:225.60px">-</div>
<div class="t" style="left:499.50px;top:225.60px">$</div>
<div class="t" style="left:495.80px;width:38.98px;text-align:right;top:225.60px">-</div>
<div class="t" style="left:549.08px;top:225.60px">$</div>
<div class="t" style="left:545.38px;width:38.98px;text-align:right;top:225.60px">-</div>
<div class="t" style="left:598.66px;top:225.60px">$</div>
<div class="t" style="left:594.96px;width:38.98px;text-align:right;top:225.60px">-</div>
<div class="t" style="left:648.24px;top:225.60px">$</div>
<div class="t" style="left:644.54px;width:38.98px;text-align:right;top:225.60px">-</div>
<div class="t" style="left:3.70px;top:236.05px">$</div>
<div class="t" style="left:0.00px;width:38.98px;text-align:right;top:236.05px">-</div>
<div class="t" style="left:53.28px;top:236.05px">$</div>
<div class="t" style="left:49.58px;width:38.98px;text-align:right;top:236.05px">-</div>
<div class="t" style="left:102.86px;top:236.05px">$</div>
<div class="t" style="left:99.16px;width:38.98px;text-align:right;top:236.05px">-</div>
<div class="t" style="left:152.44px;top:236.05px">$</div>
<div class="t" style="left:148.74px;width:38.98px;text-align:right;top:236.05px">-</div>
<div class="t" style="left:202.02px;top:236.05px">$</div>
<div class="t" style="left:198.32px;width:38.98px;text-align:right;top:236.05px">-</div>
<div class="t" style="left:251.60px;top:236.05px">$</div>
<div class="t" style="left:247.90px;width:38.98px;text-align:right;top:236.05px">-</div>
<div class="t" style="left:301.18px;top:236.05px">$</div>
<div class="t" style="left:297.48px;width:38.98px;text-align:right;top:236.05px">-</div>
<div class="t" style="left:350.76px;top:236.05px">$</div>
<div class="t" style="left:347.06px;width:38.98px;text-align:right;top:236.05px">-</div>
<div class="t" style="left:400.34px;top:236.05px">$</div>
<div class="t" style="left:396.64px;width:38.98px;text-align:right;top:236.05px">-</div>
<div class="t" style="left:449.92px;top:236.05px">$</div>
<div class="t" style="left:446.22px;width:38.98px;text-align:right;top:236.05px">-</div>
<div class="t" style="left:499.50px;top:236.05px">$</div>
<div class="t" style="left:495.80px;width:38.98px;text-align:right;top:236.05px">-</div>
<div class="t" style="left:549.08px;top:236.05px">$</div>
<div class="t" style="left:545.38px;width:38.98px;text-align:right;top:236.05px">-</div>
<div class="t" style="left:598.66px;top:236.05px">$</div>
<div class="t" style="left:594.96px;width:38.98px;text-align:right;top:236.05px">-</div>
<div class="t" style="left:648.24px;top:236.05px">$</div>
<div class="t" style="left:644.54px;width:38.98px;text-align:right;top:236.05px">-</div>
<div class="t" style="left:3.70px;top:246.50px">$</div>
<div class="t" style="left:0.00px;width:38.98px;text-align:right;top:246.50px">-</div>
<div class="t" style="left:53.28px;top:246.50px">$</div>
<div class="t" style="left:49.58px;width:38.98px;text-align:right;top:246.50px">-</div>
<div class="t" style="left:102.86px;top:246.50px">$</div>
<div class="t" style="left:99.16px;width:38.98px;text-align:right;top:246.50px">-</div>
<div class="t" style="left:152.44px;top:246.50px">$</div>
<div class="t" style="left:148.74px;width:38.98px;text-align:right;top:246.50px">-</div>
<div class="t" style="left:202.02px;top:246.50px">$</div>
<div class="t" style="left:198.32px;width:38.98px;text-align:right;top:246.50px">-</div>
<div class="t" style="left:251.60px;top:246.50px">$</div>
<div class="t" style="left:247.90px;width:38.98px;text-align:right;top:246.50px">-</div>
<div class="t" style="left:301.18px;top:246.50px">$</div>
<div class="t" style="left:297.48px;width:38.98px;text-align:right;top:246.50px">-</div>
<div class="t" style="left:350.76px;top:246.50px">$</div>
<div class="t" style="left:347.06px;width:38.98px;text-align:right;top:246.50px">-</div>
<div class="t" style="left:400.34px;top:246.50px">$</div>
<div class="t" style="left:396.64px;width:38.98px;text-align:right;top:246.50px">-</div>
<div class="t" style="left:449.92px;top:246.50px">$</div>
<div class="t" style="left:446.22px;width:38.98px;text-align:right;top:246.50px">-</div>
<div class="t" style="left:499.50px;top:246.50px">$</div>
<div class="t" style="left:495.80px;width:38.98px;text-align:right;top:246.50px">-</div>
<div class="t" style="left:549.08px;top:246.50px">$</div>
<div class="t" style="left:545.38px;width:38.98px;text-align:right;top:246.50px">-</div>
<div class="t" style="left:598.66px;top:246.50px">$</div>
<div class="t" style="left:594.96px;width:38.98px;text-align:right;top:246.50px">-</div>
<div class="t" style="left:648.24px;top:246.50px">$</div>
<div class="t" style="left:644.54px;width:38.98px;text-align:right;top:246.50px">-</div>
<div class="t" style="left:3.70px;top:256.95px">$</div>
<div class="t" style="left:0.00px;width:38.98px;text-align:right;top:256.95px">-</div>
<div class="t" style="left:53.28px;top:256.95px">$</div>
<div class="t" style="left:49.58px;width:38.98px;text-align:right;top:256.95px">-</div>
<div class="t" style="left:102.86px;top:256.95px">$</div>
<div class="t" style="left:99.16px;width:38.98px;text-align:right;top:256.95px">-</div>
<div class="t" style="left:152.44px;top:256.95px">$</div>
<div class="t" style="left:148.74px;width:38.98px;text-align:right;top:256.95px">-</div>
<div class="t" style="left:202.02px;top:256.95px">$</div>
<div class="t" style="left:198.32px;width:38.98px;text-align:right;top:256.95px">-</div>
<div class="t" style="left:251.60px;top:256.95px">$</div>
<div class="t" style="left:247.90px;width:38.98px;text-align:right;top:256.95px">-</div>
<div class="t" style="left:301.18px;top:256.95px">$</div>
<div class="t" style="left:297.48px;width:38.98px;text-align:right;top:256.95px">-</div>
<div class="t" style="left:350.76px;top:256.95px">$</div>
<div class="t" style="left:347.06px;width:38.98px;text-align:right;top:256.95px">-</div>
<div class="t" style="left:400.34px;top:256.95px">$</div>
<div class="t" style="left:396.64px;width:38.98px;text-align:right;top:256.95px">-</div>
<div class="t" style="left:449.92px;top:256.95px">$</div>
<div class="t" style="left:446.22px;width:38.98px;text-align:right;top:256.95px">-</div>
<div class="t" style="left:499.50px;top:256.95px">$</div>
<div class="t" style="left:495.80px;width:38.98px;text-align:right;top:256.95px">-</div>
<div class="t" style="left:549.08px;top:256.95px">$</div>
<div class="t" style="left:545.38px;width:38.98px;text-align:right;top:256.95px">-</div>
<div class="t" style="left:598.66px;top:256.95px">$</div>
<div class="t" style="left:594.96px;width:38.98px;text-align:right;top:256.95px">-</div>
<div class="t" style="left:648.24px;top:256.95px">$</div>
<div class="t" style="left:644.54px;width:38.98px;text-align:right;top:256.95px">-</div>
<div class="t" style="left:3.70px;top:267.40px">$</div>
<div class="t" style="left:0.00px;width:38.98px;text-align:right;top:267.40px">-</div>
<div class="t" style="left:53.28px;top:267.40px">$</div>
<div class="t" style="left:49.58px;width:38.98px;text-align:right;top:267.40px">-</div>
<div class="t" style="left:102.86px;top:267.40px">$</div>
<div class="t" style="left:99.16px;width:38.98px;text-align:right;top:267.40px">-</div>
<div class="t" style="left:152.44px;top:267.40px">$</div>
<div class="t" style="left:148.74px;width:38.98px;text-align:right;top:267.40px">-</div>
<div class="t" style="left:202.02px;top:267.40px">$</div>
<div class="t" style="left:198.32px;width:38.98px;text-align:right;top:267.40px">-</div>
<div class="t" style="left:251.60px;top:267.40px">$</div>
<div class="t" style="left:247.90px;width:38.98px;text-align:right;top:267.40px">-</div>
<div class="t" style="left:301.18px;top:267.40px">$</div>
<div class="t" style="left:297.48px;width:38.98px;text-align:right;top:267.40px">-</div>
<div class="t" style="left:350.76px;top:267.40px">$</div>
<div class="t" style="left:347.06px;width:38.98px;text-align:right;top:267.40px">-</div>
<div class="t" style="left:400.34px;top:267.40px">$</div>
<div class="t" style="left:396.64px;width:38.98px;text-align:right;top:267.40px">-</div>
<div class="t" style="left:449.92px;top:267.40px">$</div>
<div class="t" style="left:446.22px;width:38.98px;text-align:right;top:267.40px">-</div>
<div class="t" style="left:499.50px;top:267.40px">$</div>
<div class="t" style="left:495.80px;width:38.98px;text-align:right;top:267.40px">-</div>
<div class="t" style="left:549.08px;top:267.40px">$</div>
<div class="t" style="left:545.38px;width:38.98px;text-align:right;top:267.40px">-</div>
<div class="t" style="left:598.66px;top:267.40px">$</div>
<div class="t" style="left:594.96px;width:38.98px;text-align:right;top:267.40px">-</div>
<div class="t" style="left:648.24px;top:267.40px">$</div>
<div class="t" style="left:644.54px;width:38.98px;text-align:right;top:267.40px">-</div>
<div class="t" style="left:3.70px;top:277.85px">$</div>
<div class="t" style="left:0.00px;width:38.98px;text-align:right;top:277.85px">-</div>
<div class="t" style="left:53.28px;top:277.85px">$</div>
<div class="t" style="left:49.58px;width:38.98px;text-align:right;top:277.85px">-</div>
<div class="t" style="left:102.86px;top:277.85px">$</div>
<div class="t" style="left:99.16px;width:38.98px;text-align:right;top:277.85px">-</div>
<div class="t" style="left:152.44px;top:277.85px">$</div>
<div class="t" style="left:148.74px;width:38.98px;text-align:right;top:277.85px">-</div>
<div class="t" style="left:202.02px;top:277.85px">$</div>
<div class="t" style="left:198.32px;width:38.98px;text-align:right;top:277.85px">-</div>
<div class="t" style="left:251.60px;top:277.85px">$</div>
<div class="t" style="left:247.90px;width:38.98px;text-align:right;top:277.85px">-</div>
<div class="t" style="left:301.18px;top:277.85px">$</div>
<div class="t" style="left:297.48px;width:38.98px;text-align:right;top:277.85px">-</div>
<div class="t" style="left:350.76px;top:277.85px">$</div>
<div class="t" style="left:347.06px;width:38.98px;text-align:right;top:277.85px">-</div>
<div class="t" style="left:400.34px;top:277.85px">$</div>
<div class="t" style="left:396.64px;width:38.98px;text-align:right;top:277.85px">-</div>
<div class="t" style="left:449.92px;top:277.85px">$</div>
<div class="t" style="left:446.22px;width:38.98px;text-align:right;top:277.85px">-</div>
<div class="t" style="left:499.50px;top:277.85px">$</div>
<div class="t" style="left:495.80px;width:38.98px;text-align:right;top:277.85px">-</div>
<div class="t" style="left:549.08px;top:277.85px">$</div>
<div class="t" style="left:545.38px;width:38.98px;text-align:right;top:277.85px">-</div>
<div class="t" style="left:598.66px;top:277.85px">$</div>
<div class="t" style="left:594.96px;width:38.98px;text-align:right;top:277.85px">-</div>
<div class="t" style="left:648.24px;top:277.85px">$</div>
<div class="t" style="left:644.54px;width:38.98px;text-align:right;top:277.85px">-</div>
<div class="t" style="left:3.70px;top:288.30px">$</div>
<div class="t" style="left:0.00px;width:38.98px;text-align:right;top:288.30px">-</div>
<div class="t" style="left:53.28px;top:288.30px">$</div>
<div class="t" style="left:49.58px;width:38.98px;text-align:right;top:288.30px">-</div>
<div class="t" style="left:102.86px;top:288.30px">$</div>
<div class="t" style="left:99.16px;width:38.98px;text-align:right;top:288.30px">-</div>
<div class="t" style="left:152.44px;top:288.30px">$</div>
<div class="t" style="left:148.74px;width:38.98px;text-align:right;top:288.30px">-</div>
<div class="t" style="left:202.02px;top:288.30px">$</div>
<div class="t" style="left:198.32px;width:38.98px;text-align:right;top:288.30px">-</div>
<div class="t" style="left:251.60px;top:288.30px">$</div>
<div class="t" style="left:247.90px;width:38.98px;text-align:right;top:288.30px">-</div>
<div class="t" style="left:301.18px;top:288.30px">$</div>
<div class="t" style="left:297.48px;width:38.98px;text-align:right;top:288.30px">-</div>
<div class="t" style="left:350.76px;top:288.30px">$</div>
<div class="t" style="left:347.06px;width:38.98px;text-align:right;top:288.30px">-</div>
<div class="t" style="left:400.34px;top:288.30px">$</div>
<div class="t" style="left:396.64px;width:38.98px;text-align:right;top:288.30px">-</div>
<div class="t" style="left:449.92px;top:288.30px">$</div>
<div class="t" style="left:446.22px;width:38.98px;text-align:right;top:288.30px">-</div>
<div class="t" style="left:499.50px;top:288.30px">$</div>
<div class="t" style="left:495.80px;width:38.98px;text-align:right;top:288.30px">-</div>
<div class="t" style="left:549.08px;top:288.30px">$</div>
<div class="t" style="left:545.38px;width:38.98px;text-align:right;top:288.30px">-</div>
<div class="t" style="left:598.66px;top:288.30px">$</div>
<div class="t" style="left:594.96px;width:38.98px;text-align:right;top:288.30px">-</div>
<div class="t" style="left:648.24px;top:288.30px">$</div>
<div class="t" style="left:644.54px;width:38.98px;text-align:right;top:288.30px">-</div>
<div class="t b" style="left:3.70px;top:298.75px">$</div>
<div class="t b" style="left:0.00px;width:38.98px;text-align:right;top:298.75px">-</div>
<div class="t b" style="left:53.28px;top:298.75px">$</div>
<div class="t b" style="left:49.58px;width:38.98px;text-align:right;top:298.75px">-</div>
<div class="t b" style="left:102.86px;top:298.75px">$</div>
<div class="t b" style="left:99.16px;width:38.98px;text-align:right;top:298.75px">-</div>
<div class="t b" style="left:152.44px;top:298.75px">$</div>
<div class="t b" style="left:148.74px;width:45.88px;text-align:right;top:298.75px">21,938</div>
<div class="t b" style="left:202.02px;top:298.75px">$</div>
<div class="t b" style="left:198.32px;width:45.88px;text-align:right;top:298.75px">21,938</div>
<div class="t b" style="left:251.60px;top:298.75px">$</div>
<div class="t b" style="left:247.90px;width:45.88px;text-align:right;top:298.75px">21,938</div>
<div class="t b" style="left:301.18px;top:298.75px">$</div>
<div class="t b" style="left:297.48px;width:45.88px;text-align:right;top:298.75px">21,938</div>
<div class="t b" style="left:350.76px;top:298.75px">$</div>
<div class="t b" style="left:347.06px;width:45.88px;text-align:right;top:298.75px">21,938</div>
<div class="t b" style="left:400.34px;top:298.75px">$</div>
<div class="t b" style="left:396.64px;width:45.88px;text-align:right;top:298.75px">21,938</div>
<div class="t b" style="left:449.92px;top:298.75px">$</div>
<div class="t b" style="left:446.22px;width:45.88px;text-align:right;top:298.75px">21,938</div>
<div class="t b" style="left:499.50px;top:298.75px">$</div>
<div class="t b" style="left:495.80px;width:45.88px;text-align:right;top:298.75px">21,938</div>
<div class="t b" style="left:549.08px;top:298.75px">$</div>
<div class="t b" style="left:545.38px;width:45.88px;text-align:right;top:298.75px">21,938</div>
<div class="t b" style="left:598.66px;top:298.75px">$</div>
<div class="t b" style="left:594.96px;width:45.88px;text-align:right;top:298.75px">21,938</div>
<div class="t b" style="left:648.24px;top:298.75px">$</div>
<div class="t b" style="left:644.54px;width:45.88px;text-align:right;top:298.75px">21,938</div>
<div class="t" style="left:3.70px;top:340.55px">$</div>
<div class="t" style="left:0.00px;width:38.98px;text-align:right;top:340.55px">-</div>
<div class="t" style="left:53.28px;top:340.55px">$</div>
<div class="t" style="left:49.58px;width:38.98px;text-align:right;top:340.55px">-</div>
<div class="t" style="left:102.86px;top:340.55px">$</div>
<div class="t" style="left:99.16px;width:38.98px;text-align:right;top:340.55px">-</div>
<div class="t" style="left:152.44px;top:340.55px">$</div>
<div class="t" style="left:148.74px;width:45.88px;text-align:right;top:340.55px">5,000</div>
<div class="t" style="left:202.02px;top:340.55px">$</div>
<div class="t" style="left:198.32px;width:45.88px;text-align:right;top:340.55px">5,000</div>
<div class="t" style="left:251.60px;top:340.55px">$</div>
<div class="t" style="left:247.90px;width:45.88px;text-align:right;top:340.55px">5,000</div>
<div class="t" style="left:301.18px;top:340.55px">$</div>
<div class="t" style="left:297.48px;width:45.88px;text-align:right;top:340.55px">5,000</div>
<div class="t" style="left:350.76px;top:340.55px">$</div>
<div class="t" style="left:347.06px;width:45.88px;text-align:right;top:340.55px">5,000</div>
<div class="t" style="left:400.34px;top:340.55px">$</div>
<div class="t" style="left:396.64px;width:45.88px;text-align:right;top:340.55px">5,000</div>
<div class="t" style="left:449.92px;top:340.55px">$</div>
<div class="t" style="left:446.22px;width:45.88px;text-align:right;top:340.55px">5,000</div>
<div class="t" style="left:499.50px;top:340.55px">$</div>
<div class="t" style="left:495.80px;width:45.88px;text-align:right;top:340.55px">5,200</div>
<div class="t" style="left:549.08px;top:340.55px">$</div>
<div class="t" style="left:545.38px;width:45.88px;text-align:right;top:340.55px">5,200</div>
<div class="t" style="left:598.66px;top:340.55px">$</div>
<div class="t" style="left:594.96px;width:45.88px;text-align:right;top:340.55px">5,200</div>
<div class="t" style="left:648.24px;top:340.55px">$</div>
<div class="t" style="left:644.54px;width:45.88px;text-align:right;top:340.55px">5,200</div>
</div>
<div class="t lbl" style="left:22.2px;top:112.60px">CEO</div>
<div class="t lbl" style="left:22.2px;top:123.05px">CMO</div>
<div class="t lbl" style="left:22.2px;top:133.50px">Finance Manager</div>
<div class="t lbl" style="left:22.2px;top:143.95px">IT Expert</div>
<div class="t lbl" style="left:22.2px;top:154.40px">HR Officer</div>
<div class="t lbl" style="left:22.2px;top:164.85px">Assistants</div>
<div class="t lbl" style="left:22.2px;top:175.30px">Sales Officer</div>
<div class="t lbl" style="left:22.2px;top:185.75px">Sales Manager</div>
<div class="t lbl" style="left:22.2px;top:196.20px">Employee 1</div>
<div class="t lbl" style="left:22.2px;top:206.65px">Employee 2</div>
<div class="t lbl" style="left:22.2px;top:217.10px">Employee 3</div>
<div class="t lbl" style="left:22.2px;top:227.55px">Employee 4</div>
<div class="t lbl" style="left:22.2px;top:238.00px">Employee 5</div>
<div class="t lbl" style="left:22.2px;top:248.45px">Employee 6</div>
<div class="t lbl" style="left:22.2px;top:258.90px">Employee 7</div>
<div class="t lbl" style="left:22.2px;top:269.35px">Employee 8</div>
<div class="t lbl" style="left:22.2px;top:279.80px">Employee 9</div>
<div class="t lbl" style="left:22.2px;top:290.25px">Employee 10</div>
<div class="t lbl" style="left:22.2px;top:300.70px">Employee 11</div>
<div class="t lbl" style="left:22.2px;top:311.15px">Employee 12</div>
<div class="t lbl" style="left:22.2px;top:321.60px">Employee 13</div>
<div class="t lbl" style="left:22.2px;top:373.85px">Rent</div>
<div class="a" style="left:13.2px;top:32.8px;width:8.4px;height:16.8px;border:1px solid #217346"></div>
<div class="a" style="left:20px;top:48px;width:2px;height:2px;background:#217346;outline:0.5px solid #fff"></div>
<div class="a" style="left:789.2px;top:22px;width:10.8px;height:356.5px;background:#e9e9e9"></div>
<div class="a" style="left:790.6px;top:24px;width:8.2px;height:8.6px;background:#fff;border:0.6px solid #c8c8c8"></div>
<svg class="a" style="left:792.4px;top:26.6px" width="5" height="3" viewBox="0 0 5 3"><path d="M0.2 2.8 L2.5 0.2 L4.8 2.8 Z" fill="#333"/></svg>
<div class="a" style="left:790.6px;top:33px;width:8.2px;height:91px;background:#fff;border:0.6px solid #c4c4c4"></div>
<div class="a" style="left:790.6px;top:370.4px;width:8.2px;height:7.4px;background:#fff;border:0.6px solid #c8c8c8"></div>
<svg class="a" style="left:792.4px;top:372.8px" width="5" height="3" viewBox="0 0 5 3"><path d="M0.2 0.2 L4.8 0.2 L2.5 2.8 Z" fill="#333"/></svg>
<div class="a" style="left:0;top:378.4px;width:800px;height:11.8px;background:#e6e6e6;border-top:0.8px solid #c6c6c6"></div>
<svg class="a" style="left:11px;top:382.6px" width="4" height="5" viewBox="0 0 4 5"><path d="M3 0.6 L1 2.5 L3 4.4" stroke="#c2c2c2" stroke-width="0.8" fill="none"/></svg>
<svg class="a" style="left:22.6px;top:382.6px" width="4" height="5" viewBox="0 0 4 5"><path d="M1 0.6 L3 2.5 L1 4.4" stroke="#c2c2c2" stroke-width="0.8" fill="none"/></svg>
<div class="tab" style="left:49.6px;transform:scaleX(0.856)">Table of Contents</div>
<div class="tab" style="left:118.0px;transform:scaleX(0.852)">Input Sheet</div>
<div class="tab" style="left:167.0px;transform:scaleX(0.814)">Revenue Analysis</div>
<div class="tab" style="left:236.2px;transform:scaleX(0.853)">Investment Summary</div>
<div class="tab" style="left:317.5px;transform:scaleX(0.837)">Financial Statements</div>
<div class="tab" style="left:397.0px;transform:scaleX(0.814)">Financial Analysis</div>
<div class="tab" style="left:523.8px;transform:scaleX(0.839)">Dashboard</div>
<div class="sep" style="left:43.1px;top:380.6px;height:8px;background:#ababab"></div>
<div class="sep" style="left:112.0px;top:380.6px;height:8px;background:#ababab"></div>
<div class="sep" style="left:160.7px;top:380.6px;height:8px;background:#ababab"></div>
<div class="sep" style="left:229.0px;top:380.6px;height:8px;background:#ababab"></div>
<div class="sep" style="left:310.7px;top:380.6px;height:8px;background:#ababab"></div>
<div class="sep" style="left:389.5px;top:380.6px;height:8px;background:#ababab"></div>
<div class="sep" style="left:563.8px;top:380.6px;height:8px;background:#ababab"></div>
<div class="a" style="left:458px;top:378.4px;width:60.6px;height:10.6px;background:#fff;border-bottom:1.2px solid #217346"></div>
<div class="tab b" style="left:463.2px;color:#217346;transform:scaleX(0.855)">Working Sheet</div>
<svg class="a" style="left:577px;top:379.6px" width="10" height="10" viewBox="0 0 10 10"><circle cx="5" cy="5" r="4.1" fill="none" stroke="#7a7a7a" stroke-width="0.7"/><path d="M5 2.7 V7.3 M2.7 5 H7.3" stroke="#7a7a7a" stroke-width="0.8"/></svg>
<div class="a" style="left:678.8px;top:381.6px;width:1px;height:0.9px;background:#a0a0a0"></div>
<div class="a" style="left:678.8px;top:383.3px;width:1px;height:0.9px;background:#a0a0a0"></div>
<div class="a" style="left:678.8px;top:385px;width:1px;height:0.9px;background:#a0a0a0"></div>
<div class="a" style="left:686.4px;top:381px;width:102.6px;height:7.4px;background:#ececec"></div>
<div class="a" style="left:686.4px;top:381px;width:7.6px;height:7.4px;background:#fff;border:0.6px solid #c4c4c4"></div>
<svg class="a" style="left:688.6px;top:382.3px" width="4" height="5" viewBox="0 0 4 5"><path d="M3.4 0.2 L0.5 2.5 L3.4 4.8 Z" fill="#222"/></svg>
<div class="a" style="left:708.5px;top:381px;width:15.2px;height:7.4px;background:#fff;border:0.6px solid #bcbcbc"></div>
<div class="a" style="left:781.6px;top:381px;width:7.6px;height:7.4px;background:#fff;border:0.6px solid #c4c4c4"></div>
<svg class="a" style="left:783.8px;top:382.3px" width="4" height="5" viewBox="0 0 4 5"><path d="M0.6 0.2 L3.5 2.5 L0.6 4.8 Z" fill="#222"/></svg>
<div class="a" style="left:0;top:390.2px;width:800px;height:11.8px;background:#f1f1f1"></div>
<div class="st" style="left:6.1px;top:392.9px;transform:scaleX(0.845)">Ready</div>
<svg class="a" style="left:31.4px;top:392.6px" width="7" height="7" viewBox="0 0 7 7"><rect x="0.7" y="1.6" width="5.6" height="4.6" fill="#fafafa" stroke="#666" stroke-width="0.6"/><rect x="0.4" y="0.4" width="2.4" height="2" fill="#444"/><rect x="4" y="0.4" width="2.6" height="2" fill="#444"/><path d="M0.7 3.6 H6.3 M2.8 2.4 V6.2" stroke="#888" stroke-width="0.5"/></svg>
<svg class="a" style="left:47.6px;top:391.6px" width="9" height="9" viewBox="0 0 9 9"><circle cx="3.8" cy="3.8" r="3" fill="none" stroke="#666" stroke-width="0.6"/><circle cx="3.8" cy="2.4" r="0.6" fill="#555"/><path d="M2.2 3.6 H5.4 M3.8 3.6 V5.4" stroke="#555" stroke-width="0.6"/><path d="M5.4 5.4 L8 8 M8 5.6 L5.6 8" stroke="#333" stroke-width="0.8"/></svg>
<div class="st b" style="left:57.4px;top:392.9px;color:#222;transform:scaleX(0.862)">Accessibility: Investigate</div>
<svg class="a" style="left:588px;top:391.6px" width="9" height="9" viewBox="0 0 9 9"><rect x="0.6" y="0.8" width="7" height="4.8" fill="#555"/><rect x="4" y="4" width="4.4" height="4.4" fill="#fff" stroke="#444" stroke-width="0.6"/><circle cx="6.2" cy="6.2" r="1" fill="none" stroke="#444" stroke-width="0.5"/></svg>
<div class="st" style="left:597.4px;top:392.9px;color:#333;transform:scaleX(0.856)">Display Settings</div>
<div class="a" style="left:645px;top:390.6px;width:21px;height:11.4px;background:#c8c8c8"></div>
<svg class="a" style="left:651.6px;top:392.4px" width="8" height="8" viewBox="0 0 8 8"><path d="M0.5 0.5 H7.5 V7.5 H0.5 Z M0.5 2.8 H7.5 M0.5 5.2 H7.5 M2.8 0.5 V7.5 M5.2 0.5 V7.5" fill="none" stroke="#858585" stroke-width="0.5"/></svg>
<svg class="a" style="left:671.8px;top:392.4px" width="8" height="8" viewBox="0 0 8 8"><rect x="0.5" y="0.5" width="7" height="7" fill="none" stroke="#777" stroke-width="0.6"/><rect x="2.2" y="2.2" width="3.6" height="3.6" fill="none" stroke="#858585" stroke-width="0.5"/></svg>
<svg class="a" style="left:693.6px;top:392.4px" width="8" height="8" viewBox="0 0 8 8"><path d="M0.5 0.5 H7.5 V7.5 H0.5 Z M0.5 4 H4 V0.5 M4 4 H7.5" fill="none" stroke="#858585" stroke-width="0.5"/></svg>
<div class="a" style="left:710.6px;top:395.8px;width:3.2px;height:0.7px;background:#666"></div>
<div class="a" style="left:717px;top:395.9px;width:51.6px;height:0.6px;background:#8c8c8c"></div>
<div class="a" style="left:742.4px;top:392.6px;width:2.2px;height:7px;background:#3a3a3a"></div>
<div class="a" style="left:772.2px;top:395.8px;width:3.4px;height:0.7px;background:#666"></div>
<div class="a" style="left:773.55px;top:394.4px;width:0.7px;height:3.4px;background:#666"></div>
<div class="st" style="left:783px;top:392.9px;transform:scaleX(0.814)">100%</div>
</body></html>
